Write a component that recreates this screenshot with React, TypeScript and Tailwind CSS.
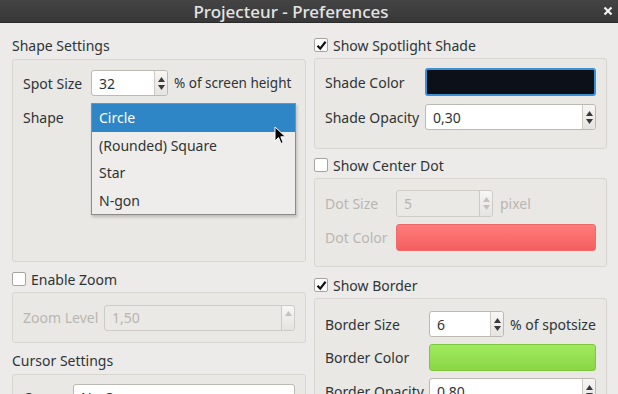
import type { ReactNode } from "react";

const FONT = { fontFamily: '"Noto Sans", "Open Sans", sans-serif' };

function GroupBox({ className, children }: { className?: string; children?: ReactNode }) {
  return (
    <div className={`relative rounded-[3px] border border-[#d9d6d2] bg-[#eae8e5] ${className ?? ""}`}>
      {children}
    </div>
  );
}

function CheckRow({ label, checked, className }: { label: string; checked?: boolean; className?: string }) {
  return (
    <div className={`flex h-5 items-center gap-[5px] ${className ?? ""}`}>
      <span className="flex h-[14px] w-[14px] items-center justify-center rounded-[2px] border border-[#a8a49f] bg-white">
        {checked && (
          <svg width="11" height="11" viewBox="0 0 11 11">
            <path d="M1.5 5.8 L4.2 8.6 L9.6 1.8" fill="none" stroke="#111" strokeWidth="2.2" />
          </svg>
        )}
      </span>
      <span className="whitespace-nowrap text-[14px] text-[#2e3436]">{label}</span>
    </div>
  );
}

function SpinArrows({ disabled, onlyUp }: { disabled?: boolean; onlyUp?: boolean }) {
  const c = disabled ? "#c4c1bd" : "#3a3a3a";
  return (
    <div className="flex w-[13px] flex-col items-center justify-center gap-[3px] rounded-r-[3px] border-l border-[#cdc9c4] bg-gradient-to-b from-[#f7f6f5] to-[#e6e4e1]">
      <svg width="7" height="5" viewBox="0 0 7 5">
        <path d="M0 5 L3.5 0 L7 5 Z" fill={c} />
      </svg>
      <svg width="7" height="5" viewBox="0 0 7 5" className={onlyUp ? "opacity-0" : ""}>
        <path d="M0 0 L3.5 5 L7 0 Z" fill={c} />
      </svg>
    </div>
  );
}

function SpinBox({
  value,
  className,
  disabled,
  onlyUp,
}: {
  value: string;
  className?: string;
  disabled?: boolean;
  onlyUp?: boolean;
}) {
  return (
    <div
      className={`flex shrink-0 rounded-[3px] border ${
        disabled ? "border-[#cfccc8] bg-[#ebe9e6] text-[#b7b4b0]" : "border-[#bcb8b2] bg-white text-[#2e3436]"
      } ${className ?? ""}`}
    >
      <div className="flex flex-1 items-center pl-[7px] text-[14px]">{value}</div>
      <SpinArrows disabled={disabled} onlyUp={onlyUp} />
    </div>
  );
}

function FieldRow({ label, labelW, disabled, children, className }: {
  label: string;
  labelW: string;
  disabled?: boolean;
  children: ReactNode;
  className?: string;
}) {
  return (
    <div className={`flex items-center whitespace-nowrap ${className ?? ""}`}>
      <span className={`${labelW} shrink-0 text-[14px] ${disabled ? "text-[#b9b6b2]" : "text-[#2e3436]"}`}>{label}</span>
      {children}
    </div>
  );
}

function Cursor() {
  return (
    <svg className="absolute left-[274px] top-[126px]" width="13" height="19" viewBox="0 0 13 19">
      <path d="M1 1 L1 15 L4.5 11.5 L7 17.5 L9.2 16.5 L6.8 10.8 L11.5 10.8 Z" fill="#000" stroke="#fff" strokeWidth="1" />
    </svg>
  );
}

export default function App() {
  return (
    <div className="relative h-[394px] w-[618px] overflow-hidden bg-[#edebe9]" style={FONT}>
      <div className="flex h-[23px] items-center justify-center border-b border-[#2a2a2a] bg-gradient-to-b from-[#444] to-[#383838] pr-[36px]">
        <span className="text-[17px] font-medium leading-none text-[#e4e4e4]">Projecteur - Preferences</span>
        <svg className="absolute right-[5px] top-[6px]" width="10" height="10" viewBox="0 0 10 10">
          <path d="M1.5 1.5 L8.5 8.5 M8.5 1.5 L1.5 8.5" stroke="#f2f2f2" strokeWidth="2.2" />
        </svg>
      </div>

      <div className="grid grid-cols-[294px_293px] gap-x-[8px] pl-[12px]">
        {/* left column */}
        <div className="flex flex-col">
          <div className="mt-[12px] flex h-5 items-center text-[14px] text-[#2e3436]">Shape Settings</div>
          <GroupBox className="mt-[4px] h-[203px] px-[10px] pt-[10px]">
            <FieldRow label="Spot Size" labelW="w-[68px]">
              <SpinBox value="32" className="h-[26px] w-[77px]" />
              <span className="ml-[6px] text-[13.5px] text-[#2e3436]">% of screen height</span>
            </FieldRow>
            <FieldRow label="Shape" labelW="w-[68px]" className="mt-[8px]">
              <div className="h-[26px] flex-1 rounded-[3px] border border-[#bcb8b2] bg-white" />
            </FieldRow>
          </GroupBox>
          <CheckRow label="Enable Zoom" className="mt-[7px]" />
          <GroupBox className="mt-[3px] flex h-[51px] items-center px-[10px]">
            <FieldRow label="Zoom Level" labelW="w-[81px]" disabled className="w-full">
              <SpinBox value="1,50" className="h-[26px] flex-1" disabled onlyUp />
            </FieldRow>
          </GroupBox>
          <div className="mt-[7px] flex h-5 items-center text-[14px] text-[#2e3436]">Cursor Settings</div>
          <GroupBox className="mt-[4px] h-[40px] px-[10px] pt-[9px]">
            <FieldRow label="Cursor" labelW="w-[50px]">
              <div className="flex h-[26px] flex-1 items-center rounded-[3px] border border-[#bcb8b2] bg-white pl-[7px] text-[14px] text-[#2e3436]">
                No Cursor
              </div>
            </FieldRow>
          </GroupBox>
        </div>

        {/* right column */}
        <div className="flex flex-col">
          <CheckRow label="Show Spotlight Shade" checked className="mt-[12px]" />
          <GroupBox className="mt-[3px] h-[91px] px-[10px] pt-[9px]">
            <FieldRow label="Shade Color" labelW="w-[100px]">
              <div className="h-[28px] flex-1 rounded-[3px] border-2 border-[#3d8fd4] bg-[#0b1117]" />
            </FieldRow>
            <FieldRow label="Shade Opacity" labelW="w-[100px]" className="mt-[8px]">
              <SpinBox value="0,30" className="h-[26px] flex-1" />
            </FieldRow>
          </GroupBox>
          <CheckRow label="Show Center Dot" className="mt-[6px]" />
          <GroupBox className="mt-[3px] h-[89px] px-[10px] pt-[11px]">
            <FieldRow label="Dot Size" labelW="w-[71px]" disabled>
              <SpinBox value="5" className="h-[27px] w-[97px]" disabled />
              <span className="ml-[7px] text-[14px] text-[#b9b6b2]">pixel</span>
            </FieldRow>
            <FieldRow label="Dot Color" labelW="w-[71px]" disabled className="mt-[7px]">
              <div className="h-[27px] flex-1 rounded-[3px] border border-[#ec6a6a] bg-gradient-to-b from-[#ff7b7b] to-[#f45f5f]" />
            </FieldRow>
          </GroupBox>
          <CheckRow label="Show Border" checked className="mt-[8px]" />
          <GroupBox className="mt-[3px] h-[120px] px-[10px] pt-[12px]">
            <FieldRow label="Border Size" labelW="w-[104px]">
              <SpinBox value="6" className="h-[26px] w-[75px]" />
              <span className="ml-[6px] text-[14px] text-[#2e3436]">% of spotsize</span>
            </FieldRow>
            <FieldRow label="Border Color" labelW="w-[104px]" className="mt-[7px]">
              <div className="h-[27px] flex-1 rounded-[3px] border border-[#7fc63e] bg-gradient-to-b from-[#a0ea5e] to-[#88d646]" />
            </FieldRow>
            <FieldRow label="Border Opacity" labelW="w-[104px]" className="mt-[7px]">
              <SpinBox value="0,80" className="h-[26px] flex-1" />
            </FieldRow>
          </GroupBox>
        </div>
      </div>

      {/* open combo popup */}
      <div className="absolute left-[91px] top-[103px] w-[205px] border border-[#8e8b87] bg-[#efedeb] shadow-[1px_2px_3px_rgba(0,0,0,0.2)]">
        {["Circle", "(Rounded) Square", "Star", "N-gon"].map((item, i) => (
          <div
            key={item}
            className={`flex h-[27.5px] items-center pl-[7px] text-[14px] ${
              i === 0 ? "bg-[#2f86c6] text-white" : "text-[#2e3436]"
            }`}
          >
            {item}
          </div>
        ))}
      </div>
      <Cursor />
    </div>
  );
}
